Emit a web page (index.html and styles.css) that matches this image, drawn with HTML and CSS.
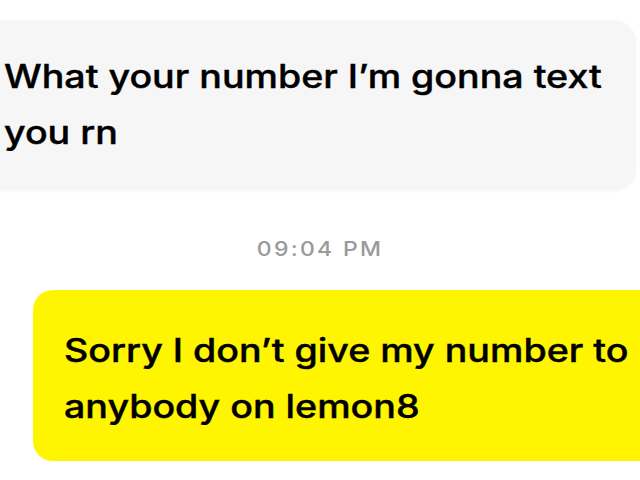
FILE: index.html
```html
<!DOCTYPE html>
<html>
<head>
<meta charset="utf-8">
<link rel="stylesheet" href="styles.css">
</head>
<body>
<div class="chat">
  <div class="bubble incoming">
    <p class="msg">What your number I’m gonna text you rn</p>
  </div>
  <div class="time"><span class="time-text">09:04 PM</span></div>
  <div class="bubble outgoing">
    <p class="msg">Sorry I don’t give my number to anybody on lemon8</p>
  </div>
</div>
</body>
</html>
```
FILE: styles.css
```css
html, body {
  margin: 0;
  padding: 0;
  background: #ffffff;
}
.chat {
  width: 640px;
  height: 480px;
  overflow: hidden;
  display: flex;
  flex-direction: column;
  font-family: Inter, "Liberation Sans", sans-serif;
}
.bubble {
  box-sizing: border-box;
  flex: none;
}
.msg {
  margin: 0;
  font-size: 32px;
  font-weight: 500;
  line-height: 56px;
  color: #000;
  -webkit-text-stroke: 0.4px #000;
  transform: scaleX(1.175);
  transform-origin: left top;
}
.incoming {
  margin-top: 20px;
  width: 636px;
  height: 170px;
  background: #f6f6f6;
  border-radius: 0 22px 22px 0;
  padding: 29px 80px 0 4px;
  box-shadow: 0 2px 3px rgba(0,0,0,0.03);
}
.time {
  margin-top: 42px;
  display: flex;
  justify-content: center;
  font-size: 20px;
  font-weight: 500;
  color: #9a9a9a;
  line-height: 34px;
}
.time-text {
  display: block;
  letter-spacing: 2px;
  transform: scaleX(1.15);
}
.outgoing {
  margin-top: 24px;
  margin-left: 33px;
  width: 640px;
  height: 171px;
  background: #fff500;
  border-radius: 20px;
  padding: 33px 100px 0 31px;
}
```
